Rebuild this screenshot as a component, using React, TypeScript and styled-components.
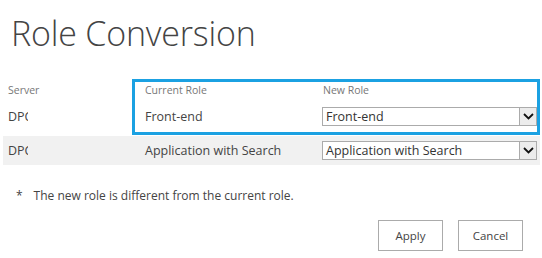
import React from "react";
import styled, { createGlobalStyle } from "styled-components";

const GlobalStyle = createGlobalStyle`
  html, body {
    margin: 0;
    padding: 0;
    background: #ffffff;
  }
  body {
    font-family: "Open Sans", "Liberation Sans", sans-serif;
    color: #444444;
  }
`;

const colors = {
  text: "#444444",
  label: "#777777",
  highlight: "#1ba1e2",
  shade: "#f1f1f1",
  border: "#ababab",
};

const Page = styled.div`
  width: 542px;
  height: 258px;
  overflow: hidden;
  display: flex;
  flex-direction: column;
`;

const Title = styled.h1`
  margin: 0;
  padding: 10px 0 0 11px;
  height: 79px;
  box-sizing: border-box;
  font-family: "Open Sans", sans-serif;
  font-weight: 300;
  font-size: 34px;
  line-height: 46px;
  color: #444444;
  letter-spacing: -0.2px;
`;

const Table = styled.div`
  margin-left: 3px;
  width: 537px;
  display: grid;
  grid-template-columns: 129px 190px 218px;
  grid-template-rows: 21px 35px 1px 29px;
`;

const HeadCell = styled.div<{ $col: number; $pad: number }>`
  grid-row: 1;
  grid-column: ${(p) => p.$col};
  padding: 1px 0 0 ${(p) => p.$pad}px;
  font-size: 10.5px;
  color: ${colors.label};
  display: flex;
  align-items: center;
`;

const Cell = styled.div<{ $col: number; $row: number; $pad: number; $shaded?: boolean }>`
  grid-row: ${(p) => p.$row};
  grid-column: ${(p) => p.$col};
  padding: 0 0 ${(p) => (p.$shaded ? 0 : 3)}px ${(p) => p.$pad}px;
  display: flex;
  align-items: center;
  font-size: 12.5px;
  color: ${colors.text};
  background: ${(p) => (p.$shaded ? colors.shade : "transparent")};
  overflow: hidden;
  white-space: nowrap;
`;

const ServerName = styled.span`
  display: block;
  width: 20px;
  overflow: hidden;
`;

const Highlight = styled.div`
  grid-column: 2 / 4;
  grid-row: 1 / 3;
  border: 3px solid ${colors.highlight};
  pointer-events: none;
  z-index: 1;
`;

const SelectBox = styled.div`
  width: 215px;
  height: 19px;
  box-sizing: border-box;
  border: 1px solid ${colors.border};
  background: #fff;
  display: flex;
  align-items: center;
`;

const SelectText = styled.span`
  flex: 1;
  padding-left: 3px;
  font-size: 12.5px;
  color: #333;
`;

const SelectArrow = styled.span`
  width: 17px;
  height: 17px;
  box-sizing: border-box;
  border-left: 1px solid ${colors.border};
  background: #ececec;
  display: flex;
  align-items: center;
  justify-content: center;
`;

const Footnote = styled.div`
  display: flex;
  gap: 11px;
  padding: 22px 0 0 16px;
  font-size: 12px;
  line-height: 17px;
  color: ${colors.text};
`;

const Actions = styled.div`
  display: flex;
  justify-content: flex-end;
  gap: 15px;
  padding: 16px 19px 0 0;
`;

const Button = styled.button`
  width: 65px;
  height: 31px;
  border: 1px solid ${colors.border};
  background: #fff;
  font-family: "Open Sans", sans-serif;
  font-size: 11.5px;
  color: ${colors.text};
  padding: 0;
`;

const Chevron = () => (
  <svg width="11" height="7" viewBox="0 0 11 7">
    <path d="M1 1 L5.5 5.5 L10 1" fill="none" stroke="#111" strokeWidth="1.8" />
  </svg>
);

const RoleSelect = ({ value }: { value: string }) => (
  <SelectBox>
    <SelectText>{value}</SelectText>
    <SelectArrow>
      <Chevron />
    </SelectArrow>
  </SelectBox>
);

const rows = [
  { server: "DPC-SP01", current: "Front-end", next: "Front-end" },
  { server: "DPC-SP02", current: "Application with Search", next: "Application with Search" },
];

export default function App() {
  return (
    <Page>
      <GlobalStyle />
      <Title>Role Conversion</Title>
      <Table>
        <HeadCell $col={1} $pad={5}>Server</HeadCell>
        <HeadCell $col={2} $pad={13}>Current Role</HeadCell>
        <HeadCell $col={3} $pad={1}>New Role</HeadCell>
        {rows.map((r, i) => {
          const row = i === 0 ? 2 : 4;
          const shaded = i === 1;
          return (
            <React.Fragment key={i}>
              <Cell $col={1} $row={row} $pad={5} $shaded={shaded}>
                <ServerName>{r.server}</ServerName>
              </Cell>
              <Cell $col={2} $row={row} $pad={13} $shaded={shaded}>
                {r.current}
              </Cell>
              <Cell $col={3} $row={row} $pad={0} $shaded={shaded}>
                <RoleSelect value={r.next} />
              </Cell>
            </React.Fragment>
          );
        })}
        <Highlight />
      </Table>
      <Footnote>
        <span>*</span>
        <span>The new role is different from the current role.</span>
      </Footnote>
      <Actions>
        <Button>Apply</Button>
        <Button>Cancel</Button>
      </Actions>
    </Page>
  );
}
